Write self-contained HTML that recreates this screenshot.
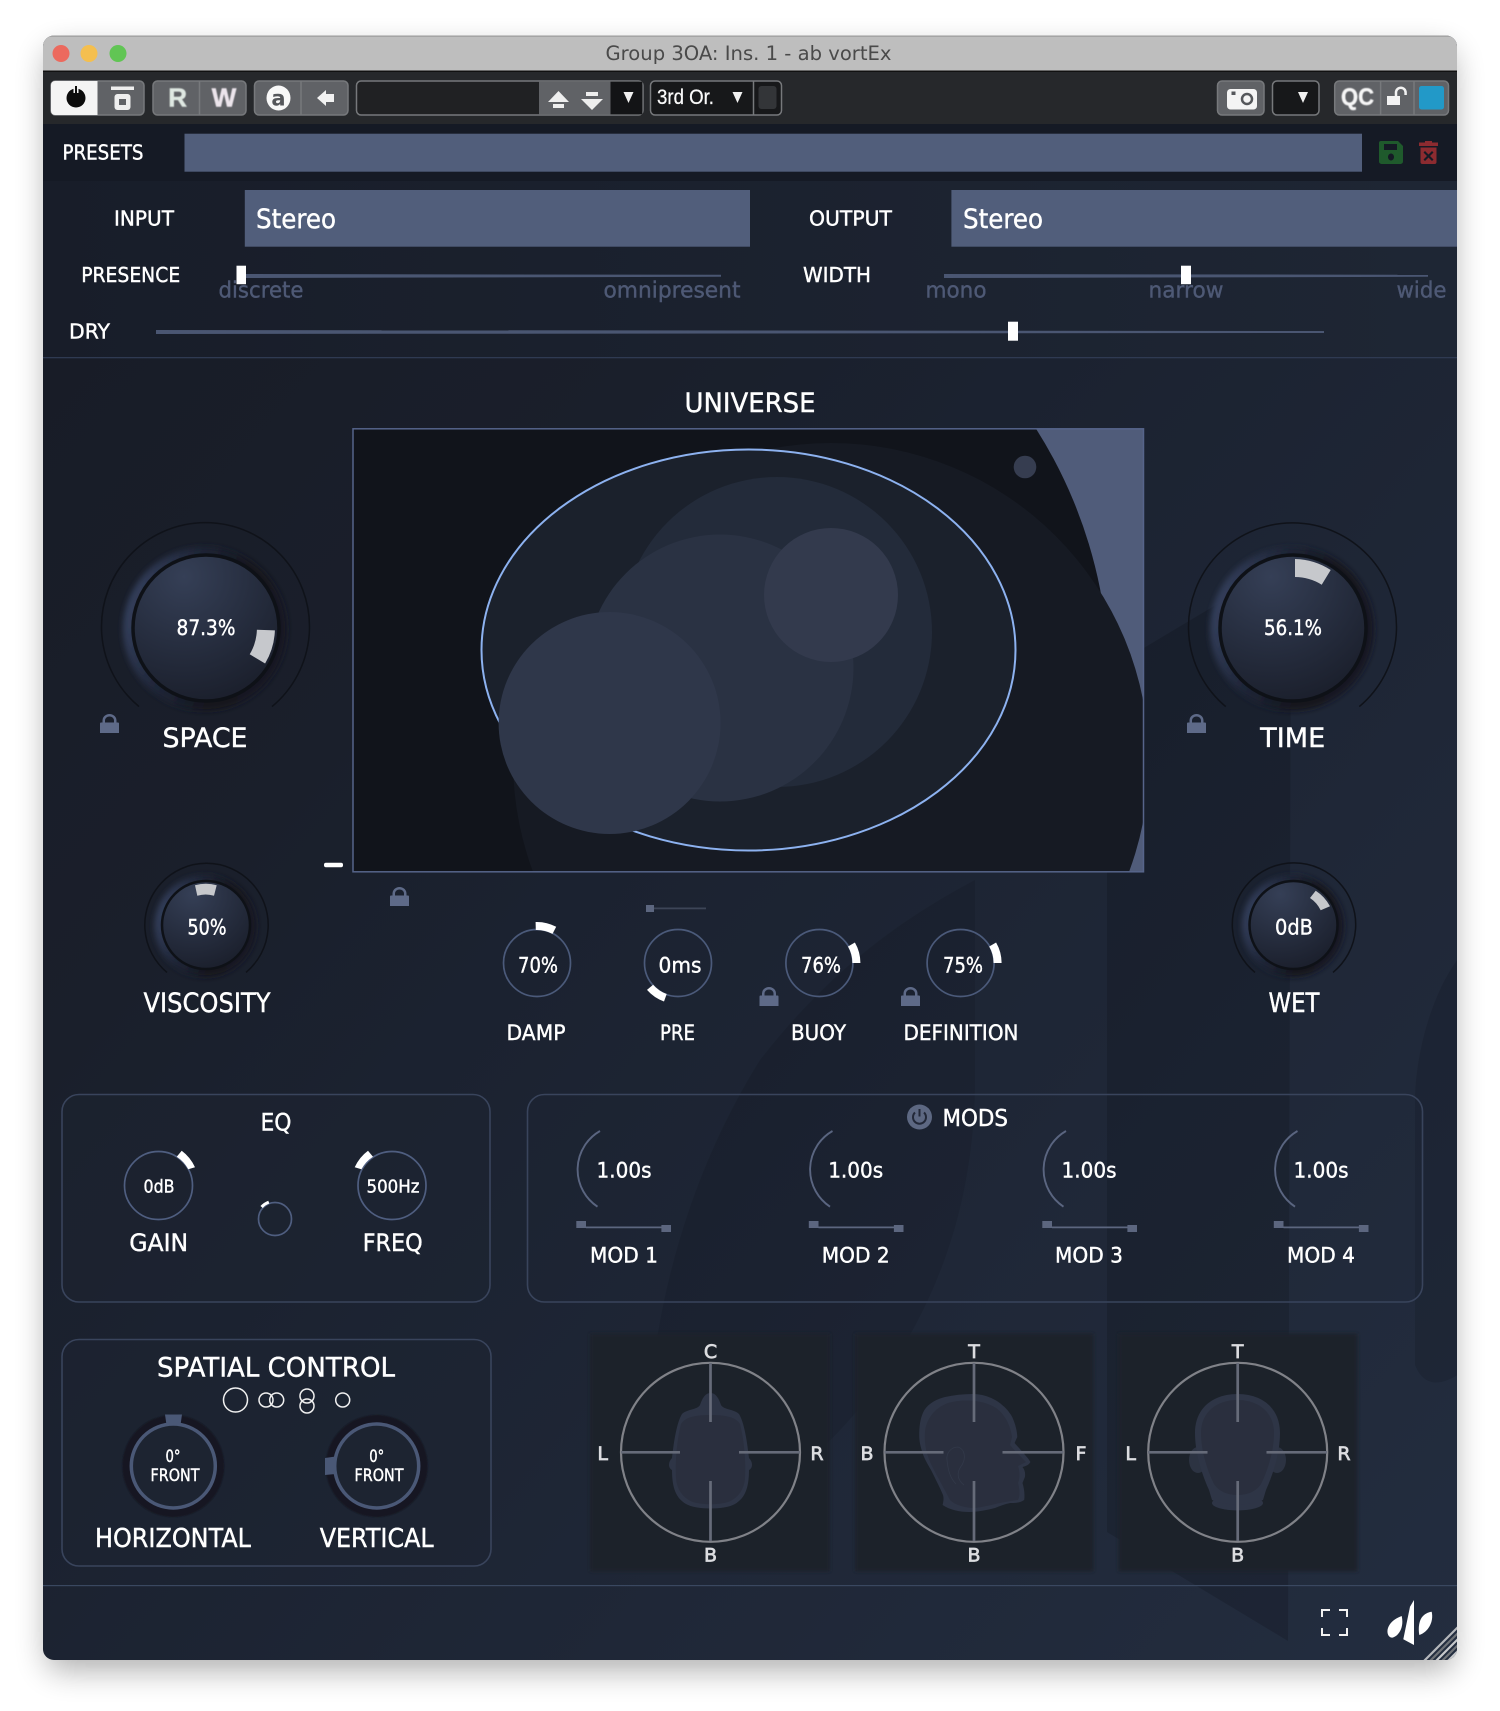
<!DOCTYPE html>
<html><head><meta charset="utf-8"><title>Group 3OA: Ins. 1 - ab vortEx</title>
<style>
html,body{margin:0;padding:0;background:#fff;width:1500px;height:1711px;overflow:hidden}
svg{display:block}
.d{font-family:"DejaVu Sans",sans-serif;fill:#fff;stroke:#fff;stroke-width:.4}
.m{text-anchor:middle}
.f{fill:#4e5975;stroke:#4e5975;font-size:22px}
.h{font-family:"DejaVu Sans",sans-serif;fill:#dcdde0;font-size:19px;text-anchor:middle;stroke:#dcdde0;stroke-width:.7}
.l{font-family:"Liberation Sans",sans-serif}
</style></head><body>
<svg width="1500" height="1711" viewBox="0 0 1500 1711" xmlns="http://www.w3.org/2000/svg">
<defs>
<filter id="sh" x="-10%" y="-10%" width="120%" height="120%"><feGaussianBlur stdDeviation="16"/></filter>
<filter id="b3" x="-30%" y="-30%" width="160%" height="160%"><feGaussianBlur stdDeviation="3"/></filter>
<filter id="b1" x="-30%" y="-30%" width="160%" height="160%"><feGaussianBlur stdDeviation=".6"/></filter>
<filter id="b2" x="-5%" y="-5%" width="110%" height="110%"><feGaussianBlur stdDeviation="1.500"/></filter>
<clipPath id="win"><rect x="43" y="35.500" width="1414" height="1624.500" rx="11"/></clipPath>
<clipPath id="uni"><rect x="353" y="428.500" width="791" height="443.500"/></clipPath>
<linearGradient id="bg" x1="0" y1="0" x2="1" y2="1"><stop offset="0" stop-color="#171b25"/><stop offset=".32" stop-color="#1a1f2b"/><stop offset=".45" stop-color="#1b2230"/><stop offset=".7" stop-color="#1f2737"/><stop offset="1" stop-color="#232d3f"/></linearGradient>
<linearGradient id="bez" x1="0" y1=".35" x2="1" y2=".65"><stop offset="0" stop-color="#35415f"/><stop offset=".3" stop-color="#20273a"/><stop offset=".65" stop-color="#12151d"/><stop offset="1" stop-color="#151923"/></linearGradient>
<radialGradient id="kn" cx=".35" cy=".15" r=".95"><stop offset="0" stop-color="#353f56"/><stop offset=".55" stop-color="#252c3d"/><stop offset="1" stop-color="#191d29"/></radialGradient>
<linearGradient id="row" x1="0" y1="0" x2="1" y2="0"><stop offset="0" stop-color="#181d29"/><stop offset="1" stop-color="#1e2634"/></linearGradient>
<path id="lock" d="M0 19V9.500a1 1 0 0 1 1-1h1.500V6.500a7 6.500 0 0 1 14 0V8.500h1.500a1 1 0 0 1 1 1V19ZM5 8.500H14V6.500a4.500 4 0 0 0-9 0Z" fill="#5e6a88" fill-rule="evenodd"/>
</defs>

<!-- window shadow -->
<rect x="47" y="50" width="1406" height="1620" rx="12" fill="#000" opacity=".32" filter="url(#sh)"/>

<g clip-path="url(#win)">
<rect x="43" y="35" width="1414" height="1626" fill="url(#bg)"/>
<!-- watermark logo -->
<g fill="#000">
<path opacity=".09" d="M975 880V1080C975 1250 900 1400 760 1500C700 1540 660 1540 650 1500C640 1400 660 1220 760 1060C830 970 900 920 975 880Z"/>
<polygon opacity=".14" points="1291,560 1107,670 1107,1532 1288,1641"/>
<path opacity=".1" d="M1465 950C1430 990 1415 1060 1415 1100V1365C1425 1390 1445 1385 1465 1370Z"/>
</g>

<!-- title bar -->
<rect x="43" y="35" width="1414" height="36" fill="#bebebe"/>
<rect x="43" y="35.500" width="1414" height="1.200" fill="#9a9a9a"/>
<rect x="43" y="70.500" width="1414" height="1.800" fill="#111"/>
<circle cx="61" cy="53.500" r="8.500" fill="#ec6a5e"/><circle cx="89" cy="53.500" r="8.500" fill="#f4bf4f"/><circle cx="118" cy="53.500" r="8.500" fill="#61c554"/>
<text x="748.500" y="60" font-family="DejaVu Sans, sans-serif" text-anchor="middle" font-size="19.500" fill="#4a4a4a" textLength="286" lengthAdjust="spacingAndGlyphs">Group 3OA: Ins. 1 - ab vortEx</text>

<!-- toolbar -->
<rect x="43" y="72" width="1414" height="52" fill="#26282b"/>
<g stroke="#77797c" stroke-width="1.500">
<rect x="51" y="81" width="93" height="34" rx="4.500" fill="#606266"/>
<rect x="153" y="81" width="93" height="34" rx="4.500" fill="#606266"/><path d="M199.500 81V115"/>
<rect x="254.500" y="81" width="93.500" height="34" rx="4.500" fill="#606266"/><path d="M301 81V115"/>
<rect x="356.500" y="81" width="286.500" height="34" rx="4.500" fill="#202123"/>
<rect x="650.500" y="81" width="131" height="34" rx="4.500" fill="#17181a"/><path d="M753.500 81V115"/>
<rect x="1217.500" y="81" width="46.500" height="34" rx="4.500" fill="#606266"/>
<rect x="1272.500" y="81" width="46.500" height="34" rx="4.500" fill="#17181a"/>
<rect x="1334.700" y="81" width="113.800" height="34" rx="4.500" fill="#606266"/><path d="M1380.600 81V115M1414 81V115"/>
</g>
<path d="M55 81H97.500V115H55a4 4 0 0 1-4-4V85a4 4 0 0 1 4-4Z" fill="#f4f4f4"/>
<rect x="539" y="81.700" width="71.500" height="32.600" fill="#606266"/>
<rect x="610.500" y="81.700" width="31.800" height="32.600" fill="#131416"/>
<circle cx="76" cy="98" r="9.500" fill="#0c0c0c"/><rect x="73.500" y="84" width="5" height="9" fill="#f4f4f4"/><rect x="75" y="86" width="2" height="12" fill="#0c0c0c"/>
<rect x="111" y="86.500" width="23" height="3.500" fill="#eee"/>
<rect x="114.500" y="94" width="16" height="16" rx="3" fill="#eee"/><rect x="119" y="99" width="7" height="6" fill="#606266"/>
<text x="177.700" y="106.500" class="l m" font-size="26" font-weight="bold" fill="#dfe8e2" stroke="#dfe8e2" stroke-width=".5" filter="url(#b1)">R</text>
<text x="224" y="106.500" class="l m" font-size="26" font-weight="bold" fill="#ece5ec" stroke="#ece5ec" stroke-width=".5" filter="url(#b1)">W</text>
<ellipse cx="278.500" cy="98" rx="12" ry="12.500" fill="#f8f8f8"/>
<text x="278.500" y="105.500" font-family="DejaVu Sans, sans-serif" text-anchor="middle" font-size="21" font-weight="bold" fill="#55575b">a</text>
<path d="M317 98L326 90V94H334V102H326V106Z" fill="#f2f2f2"/>
<path d="M548 102L558.500 91L569 102ZM553 104H564V108H553ZM586 92H598V96H586ZM581 99H603L592 110Z" fill="#eee"/>
<path d="M623.500 92H633.500L628.500 103ZM732.500 92H742.500L737.500 103ZM1298 92H1308L1303 103Z" fill="#f0f0f0"/>
<text x="657" y="104" class="l" font-size="21" fill="#fafafa" stroke="#fafafa" stroke-width=".25" textLength="57" lengthAdjust="spacingAndGlyphs">3rd Or.</text>
<rect x="758.500" y="86" width="18" height="23" rx="3" fill="#333538"/>
<!-- camera -->
<rect x="1227" y="89" width="30" height="20.500" rx="3.500" fill="#f4f4f4"/><circle cx="1247" cy="99" r="5" fill="#f4f4f4" stroke="#55575b" stroke-width="2.500"/><rect x="1231.500" y="91.500" width="4" height="3.500" fill="#55575b"/>
<text x="1357.500" y="105" class="l m" font-size="24" font-weight="bold" fill="#f6f6f6" stroke="#f6f6f6" stroke-width=".4" textLength="33" lengthAdjust="spacingAndGlyphs" filter="url(#b1)">QC</text>
<path d="M1387 96H1400V105H1387Z" fill="#f2f2f2"/><path d="M1396 96V92.500a4.800 4.800 0 0 1 9.600 0V95" fill="none" stroke="#f2f2f2" stroke-width="2.500"/>
<rect x="1419" y="86" width="25" height="23.500" rx="2.500" fill="#2299c8"/>

<!-- presets row -->
<rect x="43" y="124" width="1414" height="57" fill="#151a25"/>
<rect x="184.500" y="133.700" width="1177.500" height="38" fill="#515e7b"/>
<text x="103" y="159.500" class="d m" font-size="20" textLength="81" lengthAdjust="spacingAndGlyphs">PRESETS</text>
<path d="M1381 141H1398L1403 146V161.500a2.500 2.500 0 0 1-2.500 2.500H1381.500a2.500 2.500 0 0 1-2.500-2.500V143a2 2 0 0 1 2-2ZM1384 144V150H1397V144ZM1391 153.500a3 3.500 0 1 0 .01 0Z" fill="#1f5a2c" fill-rule="evenodd"/>
<path d="M1425 142.500V141H1432V142.500H1438V146H1419V142.500ZM1420.500 147.500H1436.500V162a2 2 0 0 1-2 2H1422.500a2 2 0 0 1-2-2ZM1425 151L1423.500 152.500L1427 156L1423.500 159.500L1425 161L1428.500 157.500L1432 161L1433.500 159.500L1430 156L1433.500 152.500L1432 151L1428.500 154.500Z" fill="#8c2b30" fill-rule="evenodd"/>

<!-- input/output row -->
<rect x="43" y="181" width="1414" height="176.500" fill="url(#row)"/>
<rect x="43" y="357" width="1414" height="1.300" fill="#2f3a52"/>
<rect x="244.800" y="190" width="505.200" height="56.700" fill="#515e7b"/>
<rect x="951.400" y="190" width="505.600" height="56.700" fill="#515e7b"/>
<text x="144" y="225.300" class="d m" font-size="20" textLength="60" lengthAdjust="spacingAndGlyphs">INPUT</text>
<text x="850.500" y="225.300" class="d m" font-size="20" textLength="83" lengthAdjust="spacingAndGlyphs">OUTPUT</text>
<text x="256" y="228" class="d" font-size="27" textLength="80" lengthAdjust="spacingAndGlyphs">Stereo</text>
<text x="963" y="228" class="d" font-size="27" textLength="80" lengthAdjust="spacingAndGlyphs">Stereo</text>
<text x="130.700" y="282" class="d m" font-size="20" textLength="99" lengthAdjust="spacingAndGlyphs">PRESENCE</text>
<text x="837" y="282" class="d m" font-size="20" textLength="68" lengthAdjust="spacingAndGlyphs">WIDTH</text>
<text x="89.500" y="338.500" class="d m" font-size="20" textLength="41" lengthAdjust="spacingAndGlyphs">DRY</text>
<g fill="#4a5672">
<polygon points="240,274 721,274.800 721,276.800 240,278"/>
<polygon points="944,274 1428,274.800 1428,276.800 944,278"/>
<polygon points="156,330 1324,331 1324,333 156,334"/>
</g>
<text x="218.500" y="297.500" class="d f" textLength="85" lengthAdjust="spacingAndGlyphs">discrete</text>
<text x="603.500" y="297.500" class="d f" textLength="137" lengthAdjust="spacingAndGlyphs">omnipresent</text>
<text x="925.500" y="297.500" class="d f" textLength="61" lengthAdjust="spacingAndGlyphs">mono</text>
<text x="1148.500" y="297.500" class="d f" textLength="75" lengthAdjust="spacingAndGlyphs">narrow</text>
<text x="1396.500" y="297.500" class="d f" textLength="50" lengthAdjust="spacingAndGlyphs">wide</text>
<g fill="#fff"><rect x="236.500" y="265.700" width="9.500" height="18.500"/><rect x="1181" y="265.700" width="10" height="18.500"/><rect x="1008" y="321.700" width="10" height="19"/></g>

<!-- universe -->
<text x="750" y="412" class="d m" font-size="27" textLength="131" lengthAdjust="spacingAndGlyphs">UNIVERSE</text>
<g clip-path="url(#uni)">
<rect x="352" y="428" width="792" height="444" fill="#505c7a"/>
<circle cx="640" cy="680" r="469" fill="#11141b"/>
<circle cx="831" cy="761" r="318" fill="#161a23"/>
<ellipse cx="748.500" cy="650" rx="267" ry="200.500" fill="#1b212c" stroke="#8db2f0" stroke-width="2"/>
<circle cx="777" cy="632" r="155" fill="#232b3a"/>
<circle cx="720" cy="668" r="133.500" fill="#2a3243"/>
<circle cx="831" cy="595" r="67" fill="#333a4d"/>
<circle cx="609.600" cy="723" r="111" fill="#2f374a"/>
<circle cx="1025" cy="467" r="11.300" fill="#363d50"/>
</g>
<rect x="353" y="428.800" width="790.500" height="443" fill="none" stroke="#56648a" stroke-width="1.500"/>
<rect x="324" y="862.700" width="19" height="4.500" rx="2" fill="#fff"/>

<!-- SPACE knob -->
<path d="M139 706.600A104 104 0 1 1 272 706.600" fill="none" stroke="#0f1219" stroke-width="1.500"/>
<circle cx="205" cy="629" r="82" fill="url(#bez)" filter="url(#b3)"/>
<circle cx="206" cy="628" r="73" fill="url(#kn)" stroke="#0e1117" stroke-width="3.500"/>
<path d="M274.900 630.400A69 69 0 0 1 265.100 663.500L249.700 654.300A51 51 0 0 0 256.900 629.800Z" fill="#c6c8cc"/>
<text x="206" y="635" class="d m" font-size="21" textLength="59" lengthAdjust="spacingAndGlyphs">87.3%</text>
<text x="205" y="747.200" class="d m" font-size="27" textLength="85" lengthAdjust="spacingAndGlyphs">SPACE</text>
<use href="#lock" x="100" y="714"/>

<!-- TIME knob -->
<path d="M1225.700 706.600A104 104 0 1 1 1359.300 706.600" fill="none" stroke="#0f1219" stroke-width="1.500"/>
<circle cx="1292" cy="629" r="82" fill="url(#bez)" filter="url(#b3)"/>
<circle cx="1293" cy="628" r="73" fill="url(#kn)" stroke="#0e1117" stroke-width="3.500"/>
<path d="M1295 559A69 69 0 0 1 1330.700 570L1321.700 584.700A51 51 0 0 0 1295 577Z" fill="#c6c8cc"/>
<text x="1293" y="635" class="d m" font-size="21" textLength="58" lengthAdjust="spacingAndGlyphs">56.1%</text>
<text x="1292.700" y="747.200" class="d m" font-size="27" textLength="65" lengthAdjust="spacingAndGlyphs">TIME</text>
<use href="#lock" x="1187" y="714"/>

<!-- VISCOSITY knob -->
<path d="M167 972.400A61.700 61.700 0 1 1 246 972.400" fill="none" stroke="#0f1219" stroke-width="1.500"/>
<circle cx="205.500" cy="926" r="51" fill="url(#bez)" filter="url(#b3)"/>
<circle cx="206" cy="925" r="44" fill="url(#kn)" stroke="#0e1117" stroke-width="2.500"/>
<path d="M195 885.300A41 41 0 0 1 216.700 885.300L214 895.700A29 29 0 0 0 197.300 895.700Z" fill="#c6c8cc"/>
<text x="207" y="934.600" class="d m" font-size="21" textLength="39" lengthAdjust="spacingAndGlyphs">50%</text>
<text x="207" y="1012" class="d m" font-size="27" textLength="127" lengthAdjust="spacingAndGlyphs">VISCOSITY</text>

<!-- WET knob -->
<path d="M1255 972.400A61.700 61.700 0 1 1 1333 972.400" fill="none" stroke="#0f1219" stroke-width="1.500"/>
<circle cx="1293" cy="926" r="51" fill="url(#bez)" filter="url(#b3)"/>
<circle cx="1293.500" cy="925" r="44" fill="url(#kn)" stroke="#0e1117" stroke-width="2.500"/>
<path d="M1315.700 890.700A41 41 0 0 1 1330 906.300L1320.700 910.300A31 31 0 0 0 1310 898Z" fill="#c6c8cc"/>
<text x="1294" y="934.600" class="d m" font-size="21" textLength="38" lengthAdjust="spacingAndGlyphs">0dB</text>
<text x="1294" y="1012" class="d m" font-size="27" textLength="51" lengthAdjust="spacingAndGlyphs">WET</text>

<!-- small dials -->
<g fill="none" stroke="#4b5a7a" stroke-width="1.700">
<circle cx="537" cy="963" r="33.500"/><circle cx="678" cy="963" r="33.500"/><circle cx="819.400" cy="963" r="33.500"/><circle cx="960.600" cy="963" r="33.500"/>
</g>
<g fill="#fff">
<path d="M535.600 922A41 41 0 0 1 556.200 926.800L552.500 933.900A33 33 0 0 0 535.800 930Z"/>
<path d="M664 1001.500A41 41 0 0 1 647 989.900L653.100 984.700A33 33 0 0 0 666.700 994Z"/>
<path d="M854.900 942.500A41 41 0 0 1 860.400 963L852.400 963A33 33 0 0 0 848 946.500Z"/>
<path d="M996.100 942.500A41 41 0 0 1 1001.600 963L993.600 963A33 33 0 0 0 989.200 946.500Z"/>
</g>
<text x="538" y="972.300" class="d m" font-size="21.500" textLength="40" lengthAdjust="spacingAndGlyphs">70%</text>
<text x="680" y="972.300" class="d m" font-size="21.500" textLength="43" lengthAdjust="spacingAndGlyphs">0ms</text>
<text x="821" y="972.300" class="d m" font-size="21.500" textLength="40" lengthAdjust="spacingAndGlyphs">76%</text>
<text x="963" y="972.300" class="d m" font-size="21.500" textLength="40" lengthAdjust="spacingAndGlyphs">75%</text>
<text x="536" y="1040" class="d m" font-size="21" textLength="59" lengthAdjust="spacingAndGlyphs">DAMP</text>
<text x="677.500" y="1040" class="d m" font-size="21" textLength="35" lengthAdjust="spacingAndGlyphs">PRE</text>
<text x="818.500" y="1040" class="d m" font-size="21" textLength="55" lengthAdjust="spacingAndGlyphs">BUOY</text>
<text x="961" y="1040" class="d m" font-size="21" textLength="115" lengthAdjust="spacingAndGlyphs">DEFINITION</text>
<rect x="650" y="907.500" width="56" height="1.800" fill="#3d4557"/>
<rect x="646" y="905" width="8" height="7" fill="#5c667f"/>
<use href="#lock" x="390" y="887"/><use href="#lock" x="759.500" y="987"/><use href="#lock" x="901" y="987"/>

<!-- EQ panel -->
<rect x="62" y="1094.500" width="428" height="207.500" rx="17" fill="#1d2431" fill-opacity=".55" stroke="#39445c" stroke-width="1.600"/>
<text x="276" y="1130.700" class="d m" font-size="24" textLength="31" lengthAdjust="spacingAndGlyphs">EQ</text>
<g fill="none" stroke="#4f5e80" stroke-width="1.700"><circle cx="158.500" cy="1185.500" r="34"/><circle cx="392" cy="1185.500" r="34"/><circle cx="275" cy="1219" r="16.500"/></g>
<path d="M181.700 1150.700A41.700 41.700 0 0 1 195 1167.300L188.300 1169.300A34 34 0 0 0 176.700 1156.700Z" fill="#fff"/>
<path d="M368 1150.700A41.700 41.700 0 0 0 354.700 1167.300L361.400 1169.300A34 34 0 0 1 373 1156.700Z" fill="#fff"/>
<path d="M261.600 1207A18 18 0 0 1 268.800 1202.100" fill="none" stroke="#fff" stroke-width="3"/>
<text x="159" y="1192.700" class="d m" font-size="18" textLength="31" lengthAdjust="spacingAndGlyphs">0dB</text>
<text x="393" y="1192.700" class="d m" font-size="18" textLength="53" lengthAdjust="spacingAndGlyphs">500Hz</text>
<text x="158.700" y="1251" class="d m" font-size="24" textLength="59" lengthAdjust="spacingAndGlyphs">GAIN</text>
<text x="392.700" y="1251" class="d m" font-size="24" textLength="60" lengthAdjust="spacingAndGlyphs">FREQ</text>

<!-- Spatial panel -->
<rect x="62" y="1339.500" width="429" height="226.500" rx="17" fill="#1d2431" fill-opacity=".55" stroke="#39445c" stroke-width="1.600"/>
<text x="276" y="1376.700" class="d m" font-size="27" textLength="238" lengthAdjust="spacingAndGlyphs">SPATIAL CONTROL</text>
<g fill="none" stroke="#f0f0f0" stroke-width="1.500"><circle cx="235.500" cy="1400" r="12"/><circle cx="266" cy="1400" r="7"/><circle cx="276.700" cy="1400" r="7"/><circle cx="307" cy="1396" r="7"/><circle cx="307" cy="1406" r="7"/><circle cx="342.700" cy="1400" r="7"/></g>
<circle cx="173.300" cy="1466" r="51" fill="#141821" filter="url(#b1)"/><circle cx="376.700" cy="1466" r="51" fill="#141821" filter="url(#b1)"/>
<circle cx="173.300" cy="1466" r="42" fill="#1d2431" stroke="#4a5876" stroke-width="3.500"/><circle cx="376.700" cy="1466" r="42" fill="#1d2431" stroke="#4a5876" stroke-width="3.500"/>
<path d="M165 1414.500H182L180.500 1425H166.500ZM325 1458L335.500 1456.500V1474L325 1475Z" fill="#4a5876"/>
<text x="173" y="1462" class="d m" font-size="17" textLength="15" lengthAdjust="spacingAndGlyphs">0°</text>
<text x="175" y="1481" class="d m" font-size="17" textLength="49" lengthAdjust="spacingAndGlyphs">FRONT</text>
<text x="376.700" y="1462" class="d m" font-size="17" textLength="15" lengthAdjust="spacingAndGlyphs">0°</text>
<text x="379" y="1481" class="d m" font-size="17" textLength="49" lengthAdjust="spacingAndGlyphs">FRONT</text>
<text x="173" y="1547" class="d m" font-size="26" textLength="156" lengthAdjust="spacingAndGlyphs">HORIZONTAL</text>
<text x="376.700" y="1547" class="d m" font-size="26" textLength="114" lengthAdjust="spacingAndGlyphs">VERTICAL</text>

<!-- Mods panel -->
<rect x="527.500" y="1094.500" width="895" height="207.500" rx="17" fill="none" stroke="#39445c" stroke-width="1.600"/>
<circle cx="919.500" cy="1117" r="12.500" fill="#5d6882"/>
<path d="M915 1112.500a6.500 6.500 0 1 0 9 0" fill="none" stroke="#222838" stroke-width="2"/><rect x="918.500" y="1109" width="2" height="7.500" fill="#222838"/>
<text x="942.500" y="1126" class="d" font-size="23" textLength="65.500" lengthAdjust="spacingAndGlyphs">MODS</text>
<g fill="none" stroke="#5a6580" stroke-width="1.900">
<path d="M600 1131A44.500 44.500 0 0 0 597.500 1206.700"/>
<path d="M832.500 1131A44.500 44.500 0 0 0 830 1206.700"/>
<path d="M1066 1131A44.500 44.500 0 0 0 1063.500 1206.700"/>
<path d="M1297.500 1131A44.500 44.500 0 0 0 1295 1206.700"/>
</g>
<g fill="#5c667f">
<path d="M576.300 1221H586V1228H576.300ZM661.400 1225H671V1232H661.400ZM808.800 1221H818.500V1228H808.800ZM893.900 1225H903.500V1232H893.900ZM1042.300 1221H1052V1228H1042.300ZM1127.400 1225H1137V1232H1127.400ZM1273.800 1221H1283.500V1228H1273.800ZM1358.900 1225H1368.500V1232H1358.900Z"/>
<path d="M586 1226.500H662V1228.300H586ZM818.500 1226.500H894V1228.300H818.500ZM1052 1226.500H1127.500V1228.300H1052ZM1283.500 1226.500H1359V1228.300H1283.500Z"/>
</g>
<g class="d m" font-size="21">
<text x="624" y="1177.300" textLength="55" lengthAdjust="spacingAndGlyphs">1.00s</text>
<text x="855.700" y="1177.300" textLength="55" lengthAdjust="spacingAndGlyphs">1.00s</text>
<text x="1089" y="1177.300" textLength="55" lengthAdjust="spacingAndGlyphs">1.00s</text>
<text x="1321" y="1177.300" textLength="55" lengthAdjust="spacingAndGlyphs">1.00s</text>
<text x="624" y="1262.300" textLength="68" lengthAdjust="spacingAndGlyphs">MOD 1</text>
<text x="855.700" y="1262.300" textLength="68" lengthAdjust="spacingAndGlyphs">MOD 2</text>
<text x="1089" y="1262.300" textLength="68" lengthAdjust="spacingAndGlyphs">MOD 3</text>
<text x="1321" y="1262.300" textLength="68" lengthAdjust="spacingAndGlyphs">MOD 4</text>
</g>

<!-- head panels -->
<g fill="#1b202b" filter="url(#b2)"><rect x="590" y="1333.500" width="240" height="238"/><rect x="855" y="1333.500" width="238.500" height="238"/><rect x="1118.500" y="1333.500" width="239" height="238"/></g>
<!-- head 1 top -->
<path d="M710.500 1393C716 1393 719 1399 721 1405C724 1410 734 1409 739 1414C744 1422 747 1440 749 1458C753 1462 753 1468 749 1470C749 1488 745 1498 735 1504C725 1510 696 1510 686 1504C676 1498 672 1488 672 1470C668 1468 668 1462 672 1458C674 1440 677 1422 682 1414C687 1409 697 1410 700 1405C702 1399 705 1393 710.500 1393Z" fill="#2e3546"/>
<path d="M710.500 1415C725 1415 736 1417 740 1424C744 1440 746 1460 745 1478C744 1490 738 1498 728 1502C718 1505 703 1505 693 1502C683 1498 677 1490 676 1478C675 1460 677 1440 681 1424C685 1417 696 1415 710.500 1415Z" fill="#2a2f3e"/>
<!-- head 2 side -->
<path d="M942.600 1505C944 1499 943.500 1497 943 1495C940 1488 936 1480 931 1470C927 1463 924 1458 922.600 1453C920 1445 919 1440 919.200 1433C919.500 1423 921 1416 924.400 1410C929 1403 937 1399 945 1397C954 1395 963 1394 972.600 1394C982 1394 991 1397 998.400 1402C1004 1406 1009 1411 1012.200 1417C1015 1423 1017 1430 1017.300 1437L1014.600 1443C1017 1446 1020 1449 1022.500 1452C1025 1455 1029 1459 1030.400 1462C1029 1465 1026 1466 1022.500 1467C1025 1470 1025.500 1474 1024.900 1477L1022.500 1483C1024 1488 1025 1494 1024.200 1500C1020 1503 1015 1503 1010.400 1503C1005 1504 1000 1506 995 1508C987 1510 978 1512 969 1512C960 1512 950 1510 942.600 1505Z" fill="#2e3546"/>
<path d="M950 1500C945 1490 938 1478 932 1466C927 1456 924 1445 925 1432C926 1420 934 1408 948 1403C962 1399 982 1399 996 1408C1006 1415 1011 1428 1012 1437L1010 1445C1014 1450 1020 1456 1026 1462L1018 1466C1020 1472 1020 1478 1018 1483C1020 1490 1020 1496 1018 1500C1000 1502 990 1506 975 1508C965 1508 955 1505 950 1500Z" fill="#2a2f3e"/>
<path d="M947 1460C946 1452 952 1447 958 1447C965 1449 966 1458 962 1465C958 1470 955 1478 964 1485M947 1460C948 1470 950 1478 956 1484" fill="none" stroke="#323949" stroke-width=".8"/>
<!-- head 3 front -->
<ellipse cx="1198" cy="1460" rx="9" ry="13" fill="#2c3342"/><ellipse cx="1277" cy="1460" rx="9" ry="13" fill="#2c3342"/>
<ellipse cx="1237.500" cy="1503" rx="25.500" ry="7.500" fill="#2e3546"/>
<path d="M1237.500 1394C1262 1394 1280 1408 1280 1433C1280 1450 1275 1470 1266 1490L1263 1500C1250 1506 1225 1506 1212 1500L1209 1490C1200 1470 1195 1450 1195 1433C1195 1408 1213 1394 1237.500 1394Z" fill="#2e3546"/>
<path d="M1237.500 1400C1258 1400 1274 1412 1274 1433C1274 1450 1268 1470 1261 1484C1255 1493 1245 1495 1237.500 1495C1230 1495 1220 1493 1214 1484C1207 1470 1201 1450 1201 1433C1201 1412 1217 1400 1237.500 1400Z" fill="#2a2f3e"/>
<!-- circles and crosses -->
<g fill="none" stroke="#808288" stroke-width="2.200"><circle cx="710.500" cy="1452.300" r="89.500"/><circle cx="974" cy="1452.300" r="89.500"/><circle cx="1237.700" cy="1452.300" r="89.500"/></g>
<g fill="none" stroke="#666b79" stroke-width="2.700">
<path d="M710.500 1363V1422M710.500 1481V1541M621 1452.300H680M739 1452.300H800"/>
<path d="M974 1363V1422M974 1481V1541M884.500 1452.300H943.500M1002.500 1452.300H1063.500"/>
<path d="M1237.700 1363V1422M1237.700 1481V1541M1148 1452.300H1207.500M1266.500 1452.300H1327"/>
</g>
<text x="710.500" y="1358" class="h">C</text><text x="710.500" y="1561.700" class="h">B</text><text x="602.700" y="1460" class="h">L</text><text x="817" y="1460" class="h">R</text>
<text x="974" y="1358" class="h">T</text><text x="974" y="1561.700" class="h">B</text><text x="867" y="1460" class="h">B</text><text x="1081" y="1460" class="h">F</text>
<text x="1237.700" y="1358" class="h">T</text><text x="1237.700" y="1561.700" class="h">B</text><text x="1130.700" y="1460" class="h">L</text><text x="1344" y="1460" class="h">R</text>

<!-- bottom bar -->
<rect x="43" y="1585" width="1414" height="1.200" fill="#3a4860"/>
<path d="M1322 1617V1610H1330M1339 1610H1347V1617M1347 1628V1635H1339M1330 1635H1322V1628" fill="none" stroke="#f2f2f2" stroke-width="2"/>
<path d="M1401.700 1616C1404 1626 1400 1635 1393 1637.500C1388 1638.500 1386.500 1632 1388 1628C1390 1622 1396 1618 1401.700 1616Z" fill="#fff"/>
<path d="M1414 1600V1645L1403.300 1639.300L1410 1606.700Z" fill="#fff"/>
<path d="M1431.700 1611.700C1434 1622 1428 1632 1419.300 1635C1418 1628 1419 1620 1423 1616C1426 1613 1429 1612 1431.700 1611.700Z" fill="#fff"/>
<g stroke-width="2.200" fill="none">
<path d="M1424 1661L1459 1626" stroke="#b5b8bc"/><path d="M1430 1661L1459 1632" stroke="#6f7378"/><path d="M1436 1661L1459 1638" stroke="#c7c9cc"/><path d="M1442 1661L1459 1644" stroke="#6f7378"/><path d="M1448 1661L1459 1650" stroke="#c7c9cc"/>
</g>
</g>
</svg>
</body></html>
